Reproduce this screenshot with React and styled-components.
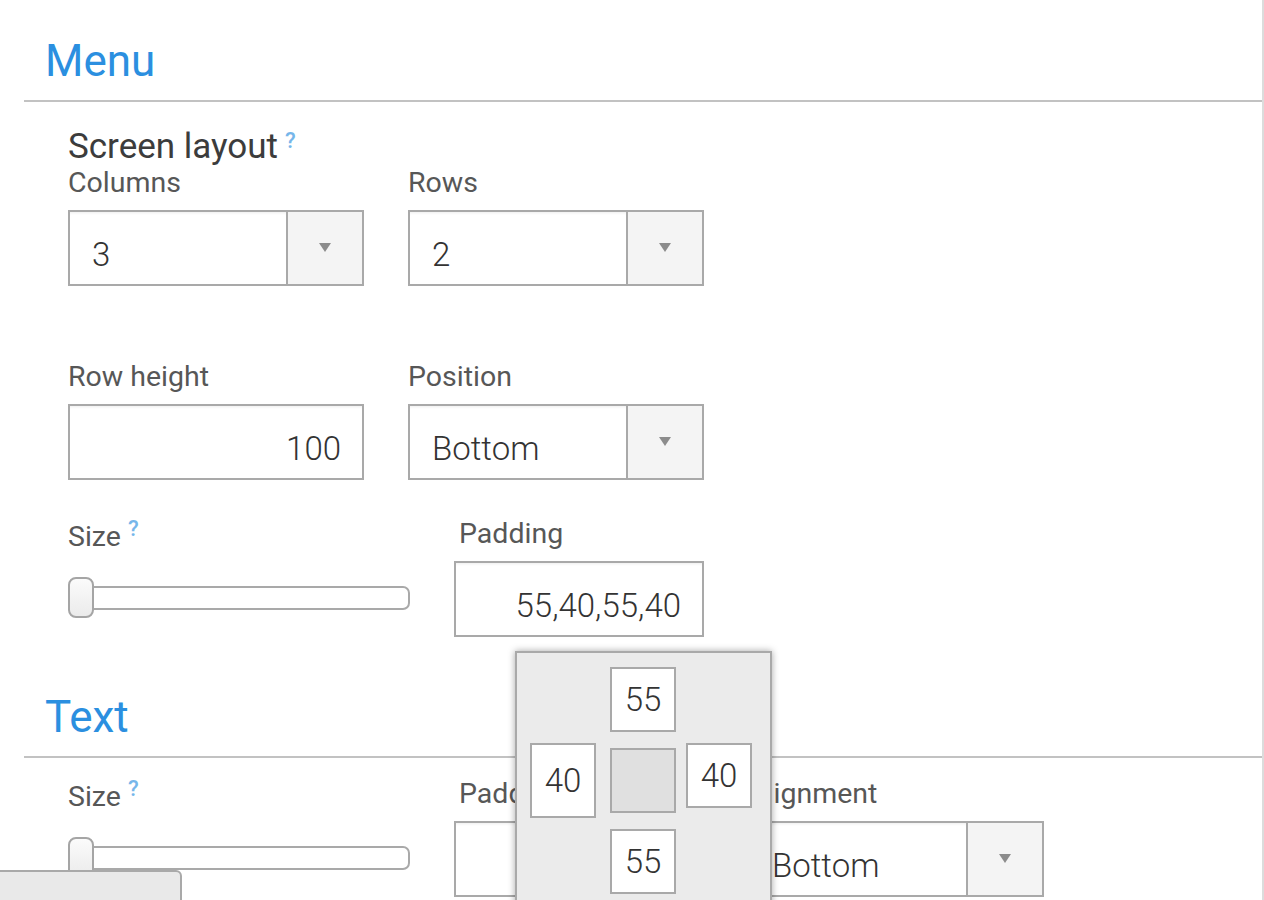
import React from 'react'
import styled, { createGlobalStyle } from 'styled-components'

const GlobalStyle = createGlobalStyle`
  html, body {
    margin: 0;
    padding: 0;
    background: #fff;
    overflow: hidden;
  }
  body {
    font-family: Roboto, "Noto Sans", "Liberation Sans", sans-serif;
  }
`

const Page = styled.div`
  width: 1238px;
  min-height: 100vh;
  padding: 35px 0 0 24px;
  border-right: 2px solid #dcdcdc;
`

const Section = styled.section`
  & + & {
    margin-top: 54px;
  }
`

const SectionTitle = styled.h1`
  margin: 0;
  padding: 0 0 13px 21px;
  font-size: 44px;
  line-height: 52px;
  font-weight: 400;
  color: #2b8fe0;
  border-bottom: 2px solid #c2c2c2;
`

const Body = styled.div`
  padding: 20px 0 0 44px;
`

const GroupTitle = styled.h2`
  margin: 5px 0 0;
  font-size: 35px;
  line-height: 40px;
  font-weight: 400;
  color: #3c3c3c;
  white-space: nowrap;
`

const Row = styled.div`
  display: grid;
  grid-template-columns: ${p => p.$cols};
  column-gap: 44px;
  margin-top: ${p => p.$gap || 0}px;
`

const Field = styled.div`
  display: flex;
  flex-direction: column;
  position: relative;
`

const Label = styled.div`
  margin: 0 0 11px ${p => p.$inset || 0}px;
  font-size: 28.5px;
  line-height: 32px;
  color: #575757;
  white-space: nowrap;
`

const Help = styled.span`
  display: inline-block;
  margin-left: 7px;
  font-size: 22px;
  line-height: 1;
  font-weight: 500;
  color: #76b6ea;
  vertical-align: 10px;
`

const Box = styled.div`
  display: flex;
  height: 76px;
  box-sizing: border-box;
  border: 2px solid #a9a9a9;
  background: #fff;
`

const Value = styled.div`
  flex: 1;
  padding: 23px ${p => (p.$right ? 21 : 0)}px 0 ${p => (p.$right ? 0 : 22)}px;
  font-size: 33px;
  line-height: 40px;
  font-weight: 300;
  color: #333;
  text-align: ${p => (p.$right ? 'right' : 'left')};
  box-shadow: inset 0 3px 3px -2px rgba(0, 0, 0, 0.07);
  white-space: nowrap;
`

const Caret = styled.div`
  width: 76px;
  box-sizing: border-box;
  border-left: 2px solid #a9a9a9;
  background: #f4f4f4;
  display: flex;
  align-items: center;
  justify-content: center;

  &::after {
    content: '';
    margin-top: -2px;
    border-left: 6px solid transparent;
    border-right: 6px solid transparent;
    border-top: 9px solid #8c8c8c;
  }
`

const Slider = styled.div`
  position: relative;
  height: 41px;
  margin-top: 13px;
`

const Track = styled.div`
  margin-top: 9px;
  height: 24px;
  box-sizing: border-box;
  border: 2px solid #a9a9a9;
  border-radius: 7px;
  background: #fff;
`

const Thumb = styled.div`
  position: absolute;
  left: 0;
  top: 0;
  width: 26px;
  height: 41px;
  box-sizing: border-box;
  border: 2px solid #a5a5a5;
  border-radius: 8px;
  background: linear-gradient(#fbfbfb, #ebebeb);
`

const Anchor = styled.div`
  position: relative;
`

const PaddingPopup = styled.div`
  position: absolute;
  z-index: 5;
  left: 61px;
  top: calc(100% + 14px);
  width: 257px;
  box-sizing: border-box;
  padding: 14px 0 14px 13px;
  border: 2px solid #a9a9a9;
  background: #ebebeb;
  box-shadow: 0 0 7px rgba(0, 0, 0, 0.35);
`

const PadGrid = styled.div`
  display: grid;
  grid-template-columns: 80px 76px 66px;
  row-gap: 11px;
  align-items: start;
`

const PadCell = styled.div`
  grid-column: ${p => p.$col};
  align-self: ${p => p.$align || 'start'};
  width: 66px;
  height: ${p => p.$h || 65}px;
  box-sizing: border-box;
  border: 2px solid #a9a9a9;
  background: ${p => (p.$blank ? '#e0e0e0' : '#fff')};
  display: flex;
  align-items: center;
  justify-content: center;
  font-size: 33px;
  font-weight: 300;
  color: #333;
`

const Dock = styled.div`
  position: fixed;
  z-index: 10;
  left: -2px;
  top: 870px;
  width: 184px;
  height: 60px;
  box-sizing: border-box;
  border: 2px solid #a9a9a9;
  border-top-right-radius: 6px;
  background: #e9e9e9;
`

function Select({ value }) {
  return (
    <Box>
      <Value>{value}</Value>
      <Caret />
    </Box>
  )
}

function Input({ value }) {
  return (
    <Box>
      <Value $right>{value}</Value>
    </Box>
  )
}

function SizeSlider() {
  return (
    <Slider>
      <Track />
      <Thumb />
    </Slider>
  )
}

export default function App() {
  return (
    <>
      <GlobalStyle />
      <Page>
        <Section>
          <SectionTitle>Menu</SectionTitle>
          <Body>
            <GroupTitle>
              Screen layout<Help>?</Help>
            </GroupTitle>
            <Row $cols="296px 296px">
              <Field>
                <Label>Columns</Label>
                <Select value="3" />
              </Field>
              <Field>
                <Label>Rows</Label>
                <Select value="2" />
              </Field>
            </Row>
            <Row $cols="296px 296px" $gap={75}>
              <Field>
                <Label>Row height</Label>
                <Input value="100" />
              </Field>
              <Field>
                <Label>Position</Label>
                <Select value="Bottom" />
              </Field>
            </Row>
            <Row $cols="342px 250px" $gap={38}>
              <Field>
                <Label>
                  Size<Help>?</Help>
                </Label>
                <SizeSlider />
              </Field>
              <Field>
                <Label $inset={5}>Padding</Label>
                <Anchor>
                  <Input value="55,40,55,40" />
                  <PaddingPopup>
                    <PadGrid>
                      <PadCell $col={2}>55</PadCell>
                      <PadCell $col={1} $h={75}>40</PadCell>
                      <PadCell $col={2} $align="center" $blank />
                      <PadCell $col={3}>40</PadCell>
                      <PadCell $col={2}>55</PadCell>
                    </PadGrid>
                  </PaddingPopup>
                </Anchor>
              </Field>
            </Row>
          </Body>
        </Section>

        <Section>
          <SectionTitle>Text</SectionTitle>
          <Body>
            <Row $cols="342px 250px 296px">
              <Field>
                <Label>
                  Size<Help>?</Help>
                </Label>
                <SizeSlider />
              </Field>
              <Field>
                <Label $inset={5}>Padding</Label>
                <Input value="" />
              </Field>
              <Field>
                <Label>Alignment</Label>
                <Select value="Bottom" />
              </Field>
            </Row>
          </Body>
        </Section>
      </Page>
      <Dock />
    </>
  )
}
